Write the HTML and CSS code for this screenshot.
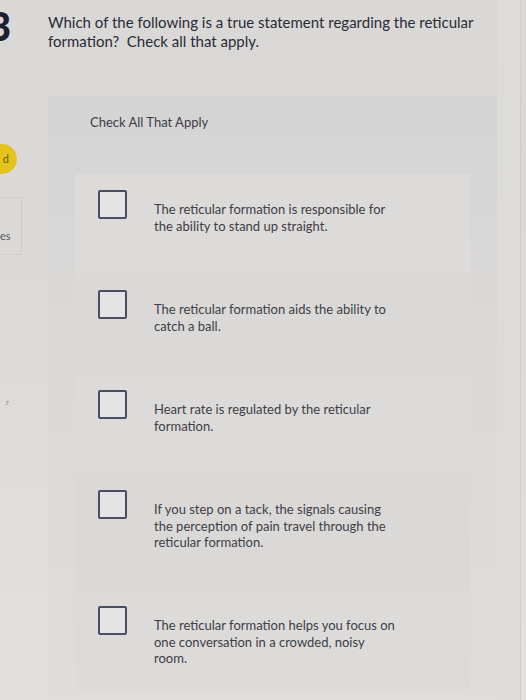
FILE: index.html
```html
<!DOCTYPE html>
<html lang="en">

<head>
    <meta charset="UTF-8">
    <meta name="viewport" content="width=device-width, initial-scale=1.0">
    <title>Question</title>
    <link rel="stylesheet" href="styles.css">
</head>

<body>
    <div class="page">
        <div class="rail">
            <div class="qnum">3</div>
            <div class="badge">d</div>
            <div class="tab">es</div>
            <div class="tick">r</div>
        </div>
        <div class="main">
            <p class="prompt">Which of the following is a true statement regarding the reticular formation?&nbsp; Check all that apply.</p>
            <div class="panel">
                <div class="hint">Check All That Apply</div>
                <div class="opts">
                    <label class="opt">
                        <span class="box"></span>
                        <span class="txt">The reticular formation is responsible for the ability to stand up straight.</span>
                    </label>
                    <label class="opt">
                        <span class="box"></span>
                        <span class="txt">The reticular formation aids the ability to catch a ball.</span>
                    </label>
                    <label class="opt">
                        <span class="box"></span>
                        <span class="txt">Heart rate is regulated by the reticular formation.</span>
                    </label>
                    <label class="opt">
                        <span class="box"></span>
                        <span class="txt">If you step on a tack, the signals causing the perception of pain travel through the reticular formation.</span>
                    </label>
                    <label class="opt">
                        <span class="box"></span>
                        <span class="txt">The reticular formation helps you focus on one conversation in a crowded, noisy room.</span>
                    </label>
                </div>
            </div>
        </div>
        <div class="edge"></div>
    </div>
</body>

</html>
```

FILE: styles.css
```css
body {
    margin: 0;
    background: #dcdbd9;
    font-family: Lato, "Noto Sans", sans-serif;
    overflow: hidden;
}

.page {
    display: flex;
    width: 526px;
    height: 700px;
    background: linear-gradient(to bottom, #d9d8d7 0%, #dbdad8 40%, #e2e1de 100%);
}

/* left rail, cut off by the photo */
.rail {
    width: 48px;
    flex: none;
    display: flex;
    flex-direction: column;
    align-items: flex-start;
}

.qnum {
    margin: 6px 0 0 -12px;
    font-size: 40px;
    font-weight: 900;
    line-height: 40px;
    color: #1d1f33;
}

.badge {
    margin: 98px 0 0 -13px;
    width: 30px;
    height: 30px;
    border-radius: 50%;
    background: #e4c41c;
    color: #6b5a10;
    font-size: 11px;
    line-height: 30px;
    text-align: right;
    box-sizing: border-box;
    padding-right: 8px;
}

.tab {
    margin-top: 23px;
    width: 22px;
    height: 58px;
    border: 1px solid #cfcecc;
    border-left: none;
    box-sizing: border-box;
    font-size: 11px;
    color: #55555f;
    display: flex;
    align-items: flex-end;
    padding-bottom: 12px;
}

.tick {
    margin: 142px 0 0 6px;
    font-size: 8px;
    color: #8d8d90;
}

.main {
    width: 449px;
    flex: none;
}

.prompt {
    margin: 13px 0 0;
    font-size: 15px;
    line-height: 19px;
    color: #2b2b36;
    width: 440px;
}

.panel {
    margin-top: 45px;
    background: linear-gradient(to bottom, #d5d4d4 0%, #d9d8d7 30%, #dfdedb 100%);
    padding: 18px 0 0 27px;
    height: 620px;
}

.hint {
    margin-left: 15px;
    font-size: 13px;
    color: #3c3c48;
}

.opts {
    margin-top: 44px;
    width: 395px;
}

.opt {
    display: flex;
    gap: 27px;
    padding: 16px 0 0 23px;
    height: 84px;
    background: #dcdbd9;
}

.opt:nth-child(2n) {
    background: #dad9d7;
}

.opt:nth-child(4) {
    height: 100px;
}

.box {
    flex: none;
    width: 29px;
    height: 29px;
    border: 2px solid #4b4e62;
    border-radius: 2px;
    box-sizing: border-box;
    background: #e4e3e6;
}

.txt {
    margin-top: 11px;
    width: 243px;
    font-size: 13px;
    line-height: 16.5px;
    color: #3e3e46;
}

.edge {
    width: 23px;
    flex: none;
    background: #dddcda;
    border-right: 1px solid #cfcecb;
}
```
